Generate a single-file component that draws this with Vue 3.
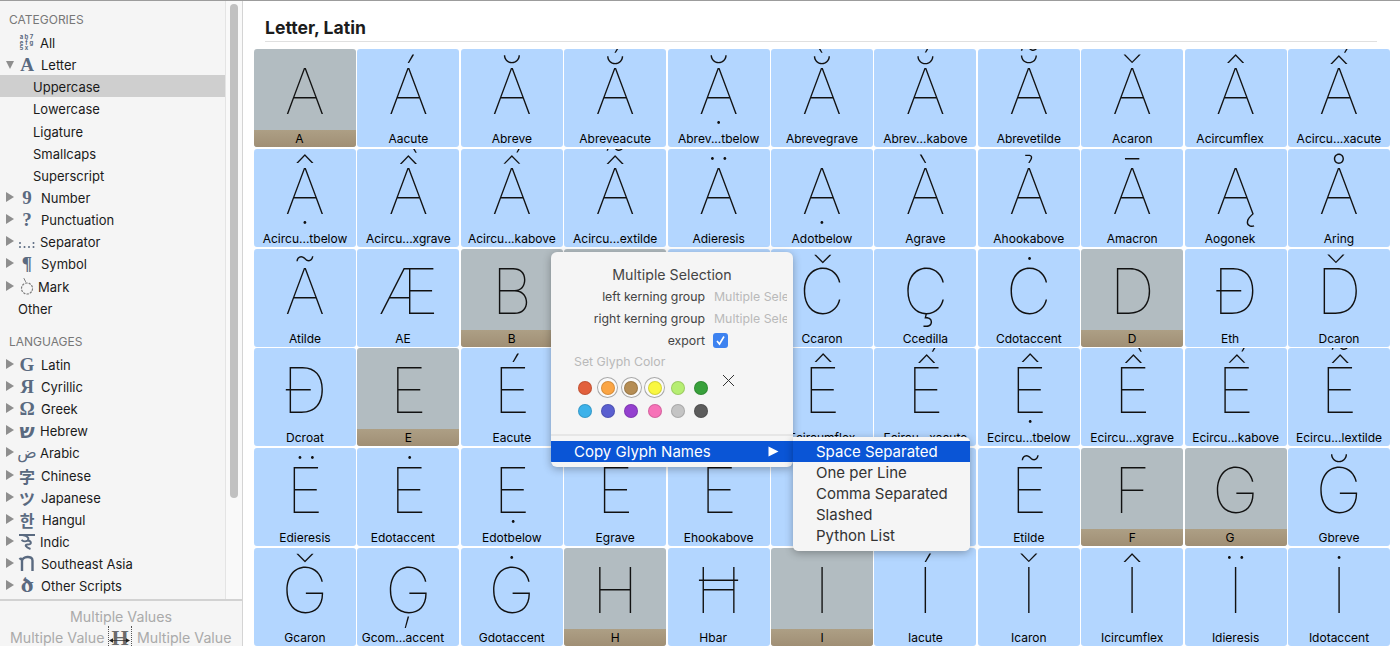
<script setup>
const slate = '#5a6a80'

const categories = [
  { label: 'All', kind: 'all', x: 'l40' },
  { label: 'Letter', icon: 'A', open: true },
  { label: 'Uppercase', sub: true, active: true },
  { label: 'Lowercase', sub: true },
  { label: 'Ligature', sub: true },
  { label: 'Smallcaps', sub: true },
  { label: 'Superscript', sub: true },
  { label: 'Number', icon: '9', arrow: true },
  { label: 'Punctuation', icon: '?', arrow: true },
  { label: 'Separator', d: 'M2 11h0M2 15h0M6.5 15h0M11 15h0M15.5 15h0M15.5 11h0', sw: 2, arrow: true, x: 'l40' },
  { label: 'Symbol', icon: '¶', arrow: true },
  { label: 'Mark', d: 'M9 6a5.5 5.5 0 1 0 .01 0', sw: 1.2, dash: '1.4 2', extra: 'M6 1.5l1.5 3', arrow: true, x: 'l38', tint: '#7c7c7c' },
  { label: 'Other', plain: true }
]

const languages = [
  { label: 'Latin', icon: 'G' },
  { label: 'Cyrillic', icon: 'Я' },
  { label: 'Greek', icon: 'Ω' },
  { label: 'Hebrew', icon: 'ש', kind: 'heb', x: 'l40' },
  { label: 'Arabic', icon: 'ض', kind: 'ara', x: 'l40' },
  { label: 'Chinese', icon: '字', kind: 'cjk' },
  { label: 'Japanese', icon: 'ツ', kind: 'cjk' },
  { label: 'Hangul', icon: '한', kind: 'cjk', x: 'l42' },
  { label: 'Indic', d: 'M1 3H17M4.5 3C10 4 11.5 6.5 9.5 8.5C7.5 10 5.5 9.5 3.5 8M9.5 8.5C14 9 14 12.5 9.5 12.5C6.5 12.5 7 15 12.5 17', sw: 1.9, x: 'l40' },
  { label: 'Southeast Asia', d: 'M4 17V7C4 2.5 14.5 1 14.5 6.5V17M1.5 5.5C2.5 4.5 3.5 4.5 4 6', sw: 2.4 },
  { label: 'Other Scripts', icon: 'ծ' }
]

const allLetters = ['a', 'b', '7', 'e', 'f', 'g', '5', 'x', '']

// labels that sit a little left of the cell centre in the app
const shifted = new Set(['A', 'AE', 'Eth', 'G', 'Acircumflex', 'Aogonek', 'Hbar', 'Edotaccent', 'Gcom...accent'])

// g = glyph shown in the cell, third item marks the grey cells
const glyphs = [
  ['A', 'A', 1], ['Aacute', 'Á'], ['Abreve', 'Ă'], ['Abreveacute', 'Ắ'], ['Abrev...tbelow', 'Ặ'], ['Abrevegrave', 'Ằ'],
  ['Abrev...kabove', 'Ẳ'], ['Abrevetilde', 'Ẵ'], ['Acaron', 'Ǎ'], ['Acircumflex', 'Â'], ['Acircu...xacute', 'Ấ'],
  ['Acircu...tbelow', 'Ậ'], ['Acircu...xgrave', 'Ầ'], ['Acircu...kabove', 'Ẩ'], ['Acircu...extilde', 'Ẫ'], ['Adieresis', 'Ä'], ['Adotbelow', 'Ạ'],
  ['Agrave', 'À'], ['Ahookabove', 'Ả'], ['Amacron', 'Ā'], ['Aogonek', 'Ą'], ['Aring', 'Å'],
  ['Atilde', 'Ã'], ['AE', 'Æ'], ['B', 'B', 1], ['C', 'C', 1], ['Cacute', 'Ć'], ['Ccaron', 'Č'],
  ['Ccedilla', 'Ç'], ['Cdotaccent', 'Ċ'], ['D', 'D', 1], ['Eth', 'Đ'], ['Dcaron', 'Ď'],
  ['Dcroat', 'Đ'], ['E', 'E', 1], ['Eacute', 'É'], ['Ebreve', 'Ĕ'], ['Ecaron', 'Ě'], ['Ecircumflex', 'Ê'],
  ['Ecircu...xacute', 'Ế'], ['Ecircu...tbelow', 'Ệ'], ['Ecircu...xgrave', 'Ề'], ['Ecircu...kabove', 'Ể'], ['Ecircu...lextilde', 'Ễ'],
  ['Edieresis', 'Ë'], ['Edotaccent', 'Ė'], ['Edotbelow', 'Ẹ'], ['Egrave', 'È'], ['Ehookabove', 'Ẻ'], ['Emacron', 'Ē'],
  ['Eogonek', 'Ę'], ['Etilde', 'Ẽ'], ['F', 'F', 1], ['G', 'G', 1], ['Gbreve', 'Ğ'],
  ['Gcaron', 'Ǧ'], ['Gcom...accent', 'Ģ'], ['Gdotaccent', 'Ġ'], ['H', 'H', 1], ['Hbar', 'Ħ'], ['I', 'I', 1],
  ['Iacute', 'Í'], ['Icaron', 'Ǐ'], ['Icircumflex', 'Î'], ['Idieresis', 'Ï'], ['Idotaccent', 'İ']
]

const swatches = [
  { c: '#e2603c' }, { c: '#fba544', ring: true }, { c: '#b58d54', ring: true }, { c: '#f9f741', ring: true }, { c: '#b6ee72' }, { c: '#38a13b' },
  { c: '#3db2ea' }, { c: '#5a5fd0' }, { c: '#9440cf' }, { c: '#f772b8' }, { c: '#c4c4c4' }, { c: '#5c5c5c' }
]

const submenu = ['Space Separated', 'One per Line', 'Comma Separated', 'Slashed', 'Python List']
</script>

<template>
  <div class="app">
    <aside class="side">
      <div class="side-body">
        <div class="lists">
          <div class="head first">CATEGORIES</div>
          <div
            v-for="row in categories"
            :key="row.label"
            class="row"
            :class="{ active: row.active, sub: row.sub, plain: row.plain }"
          >
            <span v-if="row.arrow || row.open" class="tri" :class="{ open: row.open }"></span>
            <span v-if="row.kind === 'all'" class="all-grid">
              <i v-for="(l, i) in allLetters" :key="i">{{ l }}</i>
            </span>
            <span v-else-if="row.icon" class="ico">{{ row.icon }}</span>
            <svg v-else-if="row.d" class="ico-svg" width="18" height="18" viewBox="0 0 18 18" fill="none" stroke-linecap="round">
              <path :d="row.d" :stroke="row.tint || slate" :stroke-width="row.sw" :stroke-dasharray="row.dash" />
              <path v-if="row.extra" :d="row.extra" :stroke="row.tint || slate" stroke-width="1" />
            </svg>
            <span class="txt" :class="row.x">{{ row.label }}</span>
          </div>
          <div class="head second">LANGUAGES</div>
          <div v-for="row in languages" :key="row.label" class="row">
            <span class="tri"></span>
            <span v-if="row.icon" class="ico" :class="row.kind">{{ row.icon }}</span>
            <svg v-else class="ico-svg" width="18" height="18" viewBox="0 0 18 18" fill="none">
              <path :d="row.d" :stroke="slate" :stroke-width="row.sw" />
            </svg>
            <span class="txt" :class="row.x">{{ row.label }}</span>
          </div>
        </div>
        <div class="track"><div class="thumb"></div></div>
      </div>
      <div class="values">
        <div class="val-top">Multiple Values</div>
        <div class="val-row">
          <span class="val-l">Multiple Value</span>
          <span class="val-h">
            H
            <svg class="val-arrows" width="21" height="7" viewBox="0 0 21 7">
              <path d="M3 3.5H18" stroke="#333" stroke-width="0.8" />
              <path d="M0 3.5L4 1.2V5.8ZM21 3.5L17 1.2V5.8Z" fill="#222" />
            </svg>
          </span>
          <span class="val-r">Multiple Value</span>
        </div>
      </div>
    </aside>

    <main class="main">
      <h1 class="title">Letter, Latin</h1>
      <div class="grid">
        <div v-for="g in glyphs" :key="g[0]" class="cell" :class="{ grey: g[2] }">
          <div class="glyph">{{ g[1] }}</div>
          <div class="name" :class="{ shift: shifted.has(g[0]) }">{{ g[0] }}</div>
        </div>
      </div>
    </main>

    <div class="pop">
      <div class="pop-title">Multiple Selection</div>
      <div class="field"><label>left kerning group</label><span>Multiple Selection</span></div>
      <div class="field"><label>right kerning group</label><span>Multiple Selection</span></div>
      <div class="field">
        <label>export</label>
        <i class="check">
          <svg width="11" height="11" viewBox="0 0 11 11"><path d="M2 6l2.5 3L9 1.5" fill="none" stroke="#fff" stroke-width="1.6" /></svg>
        </i>
      </div>
      <div class="color-label">Set Glyph Color</div>
      <div class="colors">
        <div class="swatches">
          <span v-for="s in swatches" :key="s.c" class="slot" :class="{ ring: s.ring }">
            <i class="dot" :style="{ background: s.c }"></i>
          </span>
        </div>
        <svg class="clear" width="13" height="13" viewBox="0 0 13 13"><path d="M1 1l11 11M12 1L1 12" stroke="#333" stroke-width="1" fill="none" /></svg>
      </div>
      <div class="sep"></div>
      <div class="copy">
        <span>Copy Glyph Names</span>
        <svg width="11" height="11" viewBox="0 0 11 11"><path d="M0.5 0.5L10.5 5.5L0.5 10.5Z" fill="#fff" /></svg>
      </div>
    </div>

    <div class="menu">
      <div v-for="(item, i) in submenu" :key="item" class="item" :class="{ on: i === 0 }">{{ item }}</div>
    </div>
  </div>
</template>

<style>
html, body { margin: 0; background: #fff; }
</style>

<style scoped>
.app {
  position: relative;
  display: flex;
  width: 1400px;
  height: 646px;
  overflow: hidden;
  border-top: 1px solid #9c9c9c;
  box-sizing: border-box;
  font-family: Inter, "Liberation Sans", sans-serif;
  color: #1a1a1a;
  background: #fff;
}

.side {
  flex: none;
  width: 242px;
  display: flex;
  flex-direction: column;
  border-right: 1px solid #d4d4d4;
}

.side-body {
  flex: 1;
  display: flex;
  min-height: 0;
}

.lists {
  width: 225px;
  background: #f5f5f5;
  border-right: 1px solid #e4e4e4;
}

.track {
  flex: 1;
  background: #f9f9f9;
  padding: 3px 4px;
}

.thumb {
  height: 494px;
  border-radius: 4px;
  background: #c1c1c1;
}

.head {
  font-size: 12px;
  color: #777;
  padding-left: 9px;
}

.head.first { padding-top: 12px; height: 18px; line-height: 14px; }
.head.second { padding-top: 11px; height: 23px; line-height: 24px; }

.row {
  position: relative;
  height: 22.15px;
  line-height: 24px;
  font-size: 13px;
  white-space: nowrap;
}

.row.active { background: #cfcfcf; }
.row.sub .txt { left: 33px; }
.row.plain .txt { left: 18px; }

.txt { position: absolute; left: 41px; top: 0; }
.txt.l38 { left: 38px; }
.txt.l40 { left: 40px; }
.txt.l42 { left: 42px; }

.tri {
  position: absolute;
  left: 6px;
  top: 6px;
  width: 0;
  height: 0;
  border-style: solid;
  border-width: 5px 0 5px 8px;
  border-color: transparent transparent transparent #8e8e8e;
}

.tri.open {
  top: 8px;
  border-width: 8px 4.5px 0;
  border-color: #8e8e8e transparent transparent;
}

.ico {
  position: absolute;
  left: 15px;
  top: 0;
  width: 24px;
  text-align: center;
  font-family: "Liberation Serif", "DejaVu Serif", serif;
  font-weight: 700;
  font-size: 19px;
  color: #5a6a80;
}

.ico.cjk { font-family: "Noto Sans CJK KR", sans-serif; font-size: 16px; }
.ico.heb { font-family: "DejaVu Sans", sans-serif; font-size: 20px; font-weight: 700; }
.ico.ara { font-family: "DejaVu Sans", sans-serif; font-size: 16px; font-weight: 400; }

.ico-svg {
  position: absolute;
  left: 18px;
  top: 2px;
}

.all-grid {
  position: absolute;
  left: 19px;
  top: 3px;
  display: grid;
  grid-template-columns: repeat(3, 5px);
  grid-auto-rows: 5.5px;
  font-size: 6px;
  line-height: 5.5px;
  font-weight: 700;
  color: #5a6a80;
  text-align: center;
}

.all-grid i { font-style: normal; }

.values {
  flex: none;
  height: 45px;
  background: #f5f5f5;
  border-top: 2px solid #d2d2d2;
  font-size: 14.2px;
  color: #aaa;
  overflow: hidden;
}

.val-top {
  text-align: center;
  line-height: 19px;
  margin-top: 6px;
}

.val-row {
  display: flex;
  align-items: center;
  height: 22px;
  padding-left: 10px;
}

.val-l, .val-r { overflow: hidden; white-space: nowrap; }
.val-l { width: 98px; }
.val-r { margin-left: 5px; width: 100px; }

.val-h {
  position: relative;
  flex: none;
  width: 24px;
  height: 22px;
  line-height: 24px;
  text-align: center;
  font-family: "Liberation Serif", serif;
  font-weight: 700;
  font-size: 22px;
  color: #6a6a6a;
  border-left: 1px dotted #555;
  border-right: 1px dotted #555;
  box-sizing: border-box;
}

.val-arrows {
  position: absolute;
  left: 0;
  top: 11px;
}

.main {
  flex: 1;
  min-width: 0;
  padding: 0 10px 0 11px;
}

.title {
  margin: 0 13px 7px 11px;
  padding: 17px 0 3px;
  height: 20px;
  line-height: 20px;
  font-size: 17.6px;
  font-weight: 700;
  color: #1c1c1c;
  border-bottom: 1px solid #e0e0e0;
}

.grid {
  display: grid;
  grid-template-columns: repeat(11, 1fr);
  grid-auto-rows: 98px;
  gap: 1.8px 1.4px;
}

.cell {
  display: flex;
  flex-direction: column;
  align-items: center;
  overflow: hidden;
  border-radius: 3px;
  background: #b3d6ff;
}

.cell.grey { background: #b2bcc1; }

.glyph {
  height: 81px;
  line-height: 85px;
  font-family: Inter, Roboto, sans-serif;
  font-weight: 100;
  font-size: 63px;
  color: #111;
}

.name {
  width: 100%;
  height: 17px;
  line-height: 17px;
  text-align: center;
  font-size: 12px;
  white-space: nowrap;
  color: #000;
  box-sizing: border-box;
}

.name.shift { padding-right: 11px; }

.cell.grey .name {
  background: linear-gradient(#ad9f85, #a08f75);
}

.pop {
  position: absolute;
  left: 551px;
  top: 251px;
  width: 242px;
  height: 215px;
  box-sizing: border-box;
  padding-top: 13px;
  border-radius: 6px;
  background: #f5f5f5;
  box-shadow: 0 2px 8px rgba(0, 0, 0, 0.3);
  overflow: hidden;
  font-size: 12.3px;
  color: #444;
  z-index: 2;
}

.pop-title {
  text-align: center;
  font-size: 14.2px;
  line-height: 20px;
}

.field {
  display: flex;
  align-items: center;
  height: 22px;
  white-space: nowrap;
}

.field label {
  width: 154px;
  text-align: right;
  flex: none;
}

.field span {
  margin-left: 9px;
  width: 73px;
  overflow: hidden;
  color: #b9b9b9;
}

.check {
  display: flex;
  align-items: center;
  justify-content: center;
  width: 15px;
  height: 15px;
  margin-left: 8px;
  border-radius: 3px;
  background: #3d82f0;
}

.color-label {
  margin-left: 23px;
  height: 22px;
  line-height: 22px;
  color: #b9b9b9;
}

.colors {
  display: flex;
  align-items: flex-start;
  margin: 3px 0 0 22px;
}

.swatches {
  display: grid;
  grid-template-columns: repeat(6, 23.3px);
  grid-auto-rows: 23.3px;
}

.slot {
  display: flex;
  align-items: center;
  justify-content: center;
  border-radius: 50%;
}

.slot.ring {
  width: 21px;
  height: 21px;
  justify-self: center;
  align-self: center;
  box-shadow: inset 0 0 0 1px #a8a8a8;
  background: #fafafa;
}

.dot {
  width: 14px;
  height: 14px;
  border-radius: 50%;
  box-shadow: inset 0 0 0 1px rgba(0, 0, 0, 0.14);
}

.clear { margin: -2px 0 0 9px; }

.sep {
  margin-top: 11px;
  height: 2px;
  background: #e6e6e6;
}

.copy {
  display: flex;
  align-items: center;
  justify-content: space-between;
  box-sizing: border-box;
  height: 21px;
  margin-top: 5px;
  padding: 0 14px 0 23px;
  background: #0a55d6;
  color: #fff;
  font-size: 15px;
}

.menu {
  position: absolute;
  left: 793px;
  top: 436px;
  width: 177px;
  height: 114px;
  box-sizing: border-box;
  padding-top: 4px;
  border-radius: 0 5px 5px 5px;
  background: #f5f5f5;
  box-shadow: 0 2px 8px rgba(0, 0, 0, 0.3);
  z-index: 3;
}

.item {
  height: 21px;
  line-height: 21px;
  padding-left: 23px;
  font-size: 15px;
  color: #333;
}

.item.on { background: #0a55d6; color: #fff; }
</style>
